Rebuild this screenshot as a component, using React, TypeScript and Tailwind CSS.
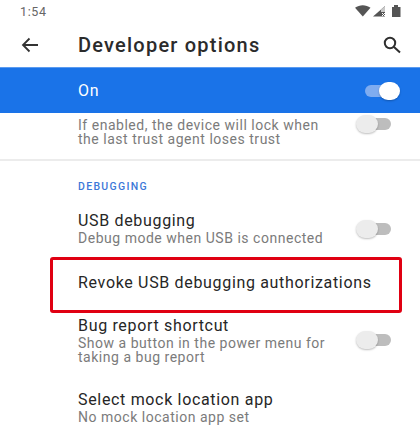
import React from "react";

function Toggle() {
  return (
    <div className="relative h-[18px] w-[35px] shrink-0">
      <div className="absolute left-[8px] right-0 top-[3px] h-[12px] rounded-full bg-[#bdbdbd]" />
      <div className="absolute left-0 top-0 h-[18px] w-[22px] rounded-full bg-[#ececec] shadow-[0_1px_2px_rgba(0,0,0,0.25)]" />
    </div>
  );
}

export default function App() {
  const title = "text-[16px] leading-[18px] tracking-[0.67px] text-[#262626]";
  const sub = "text-[14px] leading-[14px] tracking-[0.52px] text-[#7b7b7b]";
  return (
    <div className="flex h-[428px] w-[420px] flex-col overflow-hidden bg-white font-['Roboto',sans-serif]">
      <div className="flex h-[22px] shrink-0 items-center justify-between pl-[20px] pr-[19px] pt-[2px]">
        <span className="text-[12.5px] tracking-[0.6px] text-[#666]">1:54</span>
        <svg width="46" height="12" viewBox="0 0 46 12" className="mt-[-3px]">
          <path d="M0 2.8 C4.5 -0.6 11 -0.6 15.5 2.8 L7.8 11.5 Z" fill="#555" />
          <path d="M18 11.5 L30 1 V11.5 Z" fill="#555" />
          <path d="M26 4.5 L30 1 V7 H26 Z" fill="#c9c9c9" />
          <path d="M27 8 L30 11 M30 8 L27 11" stroke="#fff" strokeWidth="1" />
          <path d="M37 2 H39 V0 H43 V2 H45.5 V12 H37 Z" fill="#555" />
        </svg>
      </div>
      <div className="flex h-[45px] shrink-0 items-center pl-[21px] pr-[19px]">
        <svg width="18" height="16" viewBox="0 0 18 16" fill="none" stroke="#333" strokeWidth="1.8">
          <path d="M17 8 H2 M8.5 1.5 L2 8 L8.5 14.5" />
        </svg>
        <span className="ml-[39px] flex-1 text-[20px] font-medium leading-[24px] tracking-[1.22px] text-[#2b2b2b]">Developer options</span>
        <svg width="18" height="18" viewBox="0 0 18 18" fill="none" stroke="#2f2f2f" strokeWidth="2">
          <circle cx="7" cy="7" r="5.2" />
          <path d="M11 11 L17 16.5" />
        </svg>
      </div>
      <div className="flex h-[46px] shrink-0 items-center justify-between border-t border-[#5b9bf0] bg-[#1a73e8] pl-[78px] pr-[20px]">
        <span className="text-[16px] tracking-[0.67px] text-white">On</span>
        <div className="relative h-[18px] w-[35px]">
          <div className="absolute left-0 right-[2px] top-[3px] h-[12px] rounded-full bg-[#7facf0]" />
          <div className="absolute right-0 top-0 h-[18px] w-[21px] rounded-full bg-white shadow-[0_1px_2px_rgba(0,0,0,0.25)]" />
        </div>
      </div>
      <div className="flex h-[46px] shrink-0 justify-between pl-[78px] pr-[29px] pt-[5px]">
        <div className={sub}>
          If enabled, the device will lock when
          <br />
          the last trust agent loses trust
        </div>
        <div className="mt-[-3px]">
          <Toggle />
        </div>
      </div>
      <div className="h-[2px] shrink-0 bg-[#ececec]" />
      <div className="shrink-0 pl-[78px] pt-[20px] text-[10.5px] font-medium leading-[12px] tracking-[1.3px] text-[#3c78d8]">
        DEBUGGING
      </div>
      <div className="flex shrink-0 items-center justify-between pl-[78px] pr-[29px] pt-[19px]">
        <div>
          <div className={title}>USB debugging</div>
          <div className={`${sub} mt-[1px]`}>Debug mode when USB is connected</div>
        </div>
        <Toggle />
      </div>
      <div className="ml-[50px] mr-[18px] mt-[12px] flex h-[56px] shrink-0 items-center rounded-[3px] border-[3px] border-[#e00012] pb-[5px] pl-[25px]">
        <span className={title}>Revoke USB debugging authorizations</span>
      </div>
      <div className="flex shrink-0 justify-between pl-[78px] pr-[29px] pt-[4px]">
        <div>
          <div className={title}>Bug report shortcut</div>
          <div className={`${sub} mt-[1px]`}>
            Show a button in the power menu for
            <br />
            taking a bug report
          </div>
        </div>
        <div className="pt-[14px]">
          <Toggle />
        </div>
      </div>
      <div className="shrink-0 pl-[78px] pt-[27px]">
        <div className={title}>Select mock location app</div>
        <div className={`${sub} mt-[1px]`}>No mock location app set</div>
      </div>
    </div>
  );
}
